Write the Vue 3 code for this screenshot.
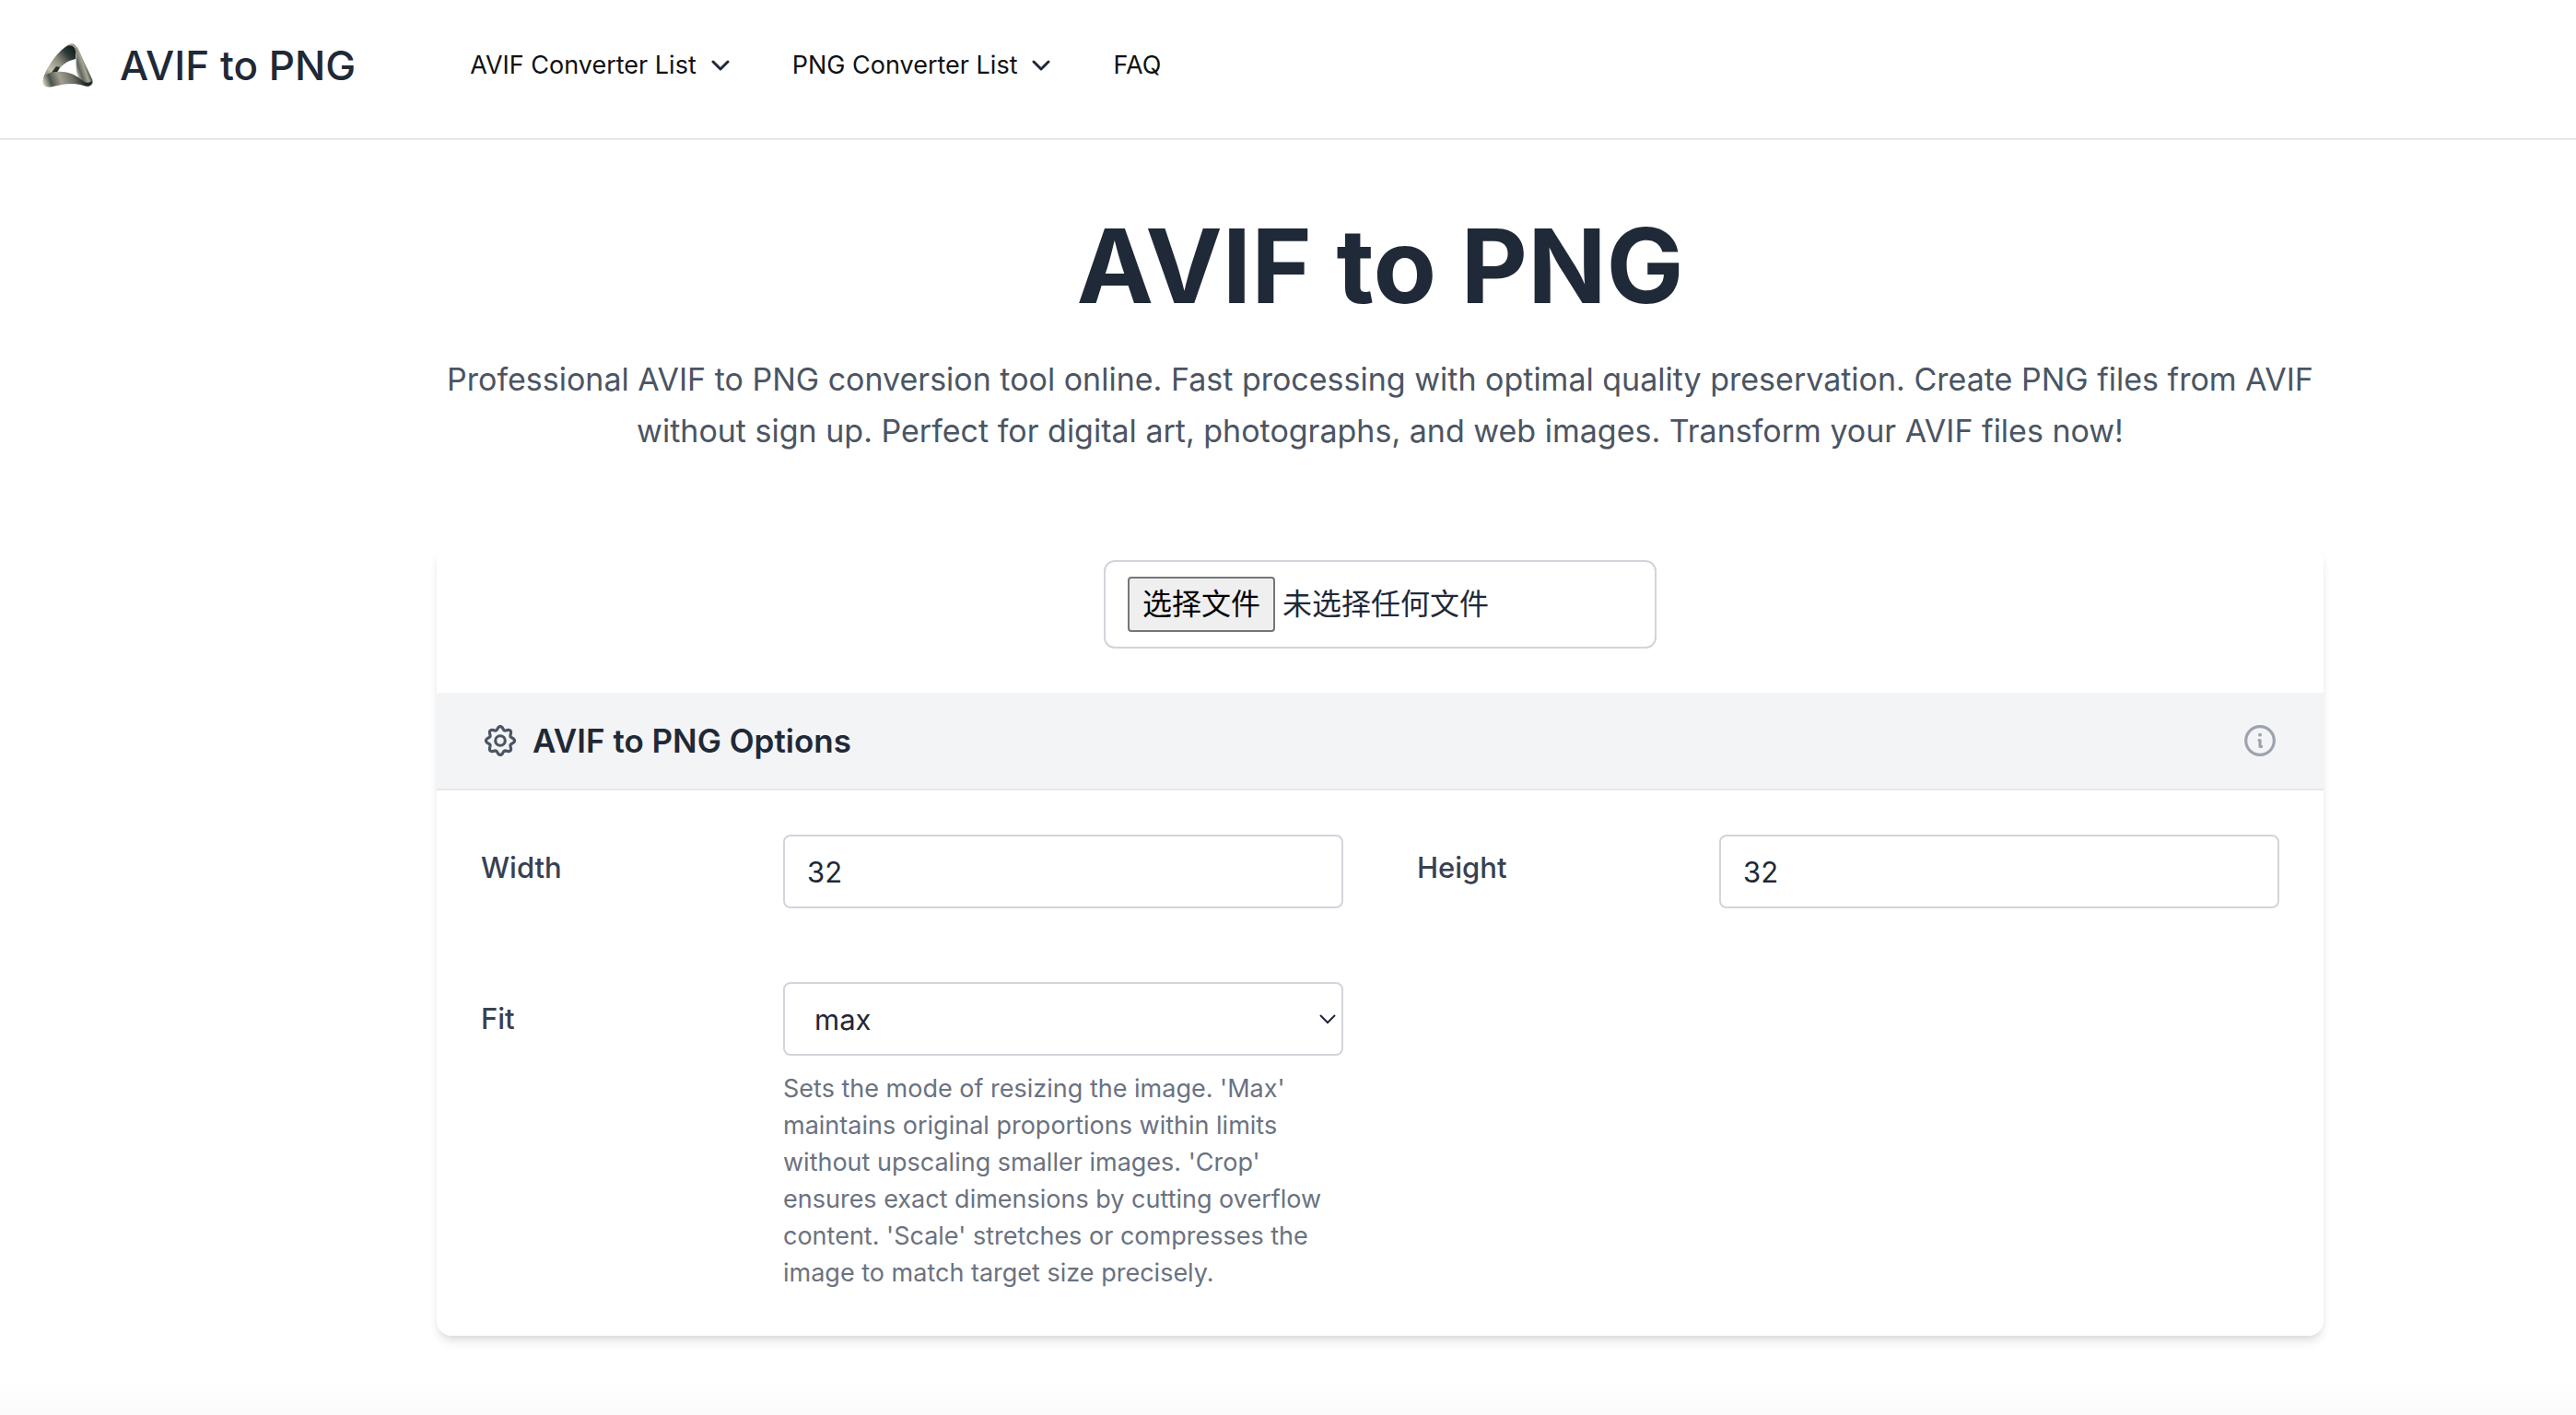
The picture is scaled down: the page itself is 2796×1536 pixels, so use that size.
<template>
  <div class="page">
    <header class="site-header">
      <a href="#" class="brand">
        <svg class="brand-logo" viewBox="0 0 58 50" aria-hidden="true">
          <defs>
            <linearGradient id="ribbon-left" gradientUnits="userSpaceOnUse" x1="3" y1="38" x2="38" y2="10">
              <stop offset="0" stop-color="#6b6e64" />
              <stop offset="0.25" stop-color="#c4c0ac" />
              <stop offset="0.55" stop-color="#8b8a7d" />
              <stop offset="0.8" stop-color="#2f3b39" />
              <stop offset="1" stop-color="#14201f" />
            </linearGradient>
            <linearGradient id="ribbon-right" gradientUnits="userSpaceOnUse" x1="36" y1="28" x2="51" y2="23">
              <stop offset="0" stop-color="#d8d5c3" />
              <stop offset="0.35" stop-color="#5d645f" />
              <stop offset="0.7" stop-color="#aaa796" />
              <stop offset="1" stop-color="#2f3b39" />
            </linearGradient>
            <linearGradient id="ribbon-bottom" gradientUnits="userSpaceOnUse" x1="3" y1="46" x2="44" y2="32">
              <stop offset="0" stop-color="#e0dcc8" />
              <stop offset="0.2" stop-color="#4b534e" />
              <stop offset="0.45" stop-color="#a19f90" />
              <stop offset="0.75" stop-color="#6d6e65" />
              <stop offset="1" stop-color="#1d2927" />
            </linearGradient>
          </defs>
          <path d="M4 36C8 25 19 9 30 3C34 0 38 4 38 9V18C29 20 21 25 18 34C10 36 6 40 4 46C2 44 3 39 4 36Z" fill="url(#ribbon-left)" />
          <path d="M17 26L21 27L17 34L11 34Z" fill="#24312e" />
          <path d="M30 3C34 0 38 2 41 7C45 17 51 29 56 40C58 45 55 48 51 47C45 43 40 39 39 31C38 22 40 10 36 5Z" fill="url(#ribbon-right)" />
          <path d="M3 40C6 33 12 32 18 32C30 31 39 36 45 41C49 45 53 44 56 42C56 47 52 49 47 47C34 43 22 46 13 48C5 50 1 46 3 40Z" fill="url(#ribbon-bottom)" />
          <path d="M30 3C33 1 36 3 38 6" fill="none" stroke="#d5d1bc" stroke-width="1" />
        </svg>
        <span class="brand-name">AVIF to PNG</span>
      </a>
      <nav class="site-nav">
        <button v-for="menu in menus" :key="menu" type="button" class="nav-item">
          {{ menu }}
          <svg class="nav-chevron" viewBox="0 0 20 20" aria-hidden="true">
            <path d="M2 6L10 14L18 6" />
          </svg>
        </button>
        <a href="#faq" class="nav-item">FAQ</a>
      </nav>
    </header>

    <main class="content">
      <section class="hero">
        <h1>AVIF to PNG</h1>
        <p>
          Professional AVIF to PNG conversion tool online. Fast processing with optimal quality preservation. Create PNG files from AVIF without sign up. Perfect for digital art, photographs, and web images. Transform your AVIF files now!
        </p>
      </section>

      <form class="card" @submit.prevent>
        <div class="upload">
          <div class="file-box">
            <button type="button" class="file-button" @click="fileInput.click()">选择文件</button>
            <span class="file-name">{{ fileName }}</span>
            <input ref="fileInput" type="file" accept=".avif" aria-label="选择文件" hidden @change="onFileChange" />
          </div>
        </div>

        <div class="options-header">
          <svg class="icon gear" viewBox="0 0 36 36" aria-hidden="true">
            <path :d="gearPath" />
            <circle cx="18" cy="18" r="5" />
          </svg>
          <h2>AVIF to PNG Options</h2>
          <button type="button" class="info-button" aria-label="Info">
            <svg class="icon info" viewBox="0 0 36 36" aria-hidden="true">
              <circle cx="18" cy="18" r="14.5" />
              <path d="M17 17.5H18V24H19.5" />
              <circle class="dot" cx="18" cy="12" r="1.8" />
            </svg>
          </button>
        </div>

        <div class="options">
          <div class="field">
            <label for="width">Width</label>
            <input id="width" v-model="options.width" type="text" inputmode="numeric" />
          </div>
          <div class="field">
            <label for="height">Height</label>
            <input id="height" v-model="options.height" type="text" inputmode="numeric" />
          </div>
          <div class="field select-field">
            <label for="fit">Fit</label>
            <div>
              <div class="select-wrap">
                <select id="fit" v-model="options.fit">
                  <option v-for="mode in fitModes" :key="mode" :value="mode">{{ mode }}</option>
                </select>
                <svg class="select-arrow" viewBox="0 0 18 12" aria-hidden="true">
                  <path d="M1 2L9 10L17 2" />
                </svg>
              </div>
              <p class="help">
                Sets the mode of resizing the image. 'Max' maintains original proportions within limits without upscaling smaller images. 'Crop' ensures exact dimensions by cutting overflow content. 'Scale' stretches or compresses the image to match target size precisely.
              </p>
            </div>
          </div>
        </div>
      </form>
    </main>
  </div>
</template>

<script setup>
import { reactive, ref } from 'vue'

const menus = ['AVIF Converter List', 'PNG Converter List']
const fitModes = ['max', 'crop', 'scale']

const options = reactive({
  width: '32',
  height: '32',
  fit: 'max'
})

const fileInput = ref(null)
const fileName = ref('未选择任何文件')

const onFileChange = (event) => {
  const file = event.target.files[0]
  fileName.value = file ? file.name : '未选择任何文件'
}

// Closed wavy outline with eight rounded teeth
const buildGear = () => {
  const points = []
  for (let i = 0; i < 96; i++) {
    const angle = (i / 96) * Math.PI * 2
    const radius = 13 + 1.7 * Math.cos(angle * 8)
    points.push(`${(18 + radius * Math.cos(angle)).toFixed(2)} ${(18 + radius * Math.sin(angle)).toFixed(2)}`)
  }
  return `M${points.join('L')}Z`
}

const gearPath = buildGear()
</script>

<style>
body {
  margin: 0;
  background: #ffffff;
}
</style>

<style scoped>
.page {
  min-height: 100vh;
  box-sizing: border-box;
  font-family: Inter, "Noto Sans CJK SC", sans-serif;
  color: #1f2937;
  background: linear-gradient(to top, #fbfbfb, #ffffff 40px);
}

.site-header {
  display: flex;
  align-items: center;
  height: 150px;
  padding: 0 44px;
  box-sizing: content-box;
  border-bottom: 2px solid #e5e7eb;
}

.brand {
  display: flex;
  align-items: center;
  gap: 28px;
  margin-right: 124px;
  padding-bottom: 8px;
  color: #1f2937;
  text-decoration: none;
}

.brand-logo {
  width: 58px;
  height: 50px;
}

.brand-name {
  font-size: 44px;
  line-height: 56px;
  font-weight: 500;
}

.site-nav {
  display: flex;
  align-items: center;
  gap: 68px;
  padding-bottom: 8px;
}

.nav-item {
  display: flex;
  align-items: center;
  gap: 16px;
  padding: 0;
  border: none;
  background: none;
  font-family: inherit;
  font-size: 27px;
  line-height: 40px;
  color: #111111;
  text-decoration: none;
  cursor: pointer;
}

.nav-chevron {
  width: 20px;
  height: 20px;
  fill: none;
  stroke: #1f2937;
  stroke-width: 3;
  stroke-linecap: round;
  stroke-linejoin: round;
}

.content {
  max-width: 2048px;
  margin: 0 auto;
  padding-left: 200px;
}

.hero {
  padding-top: 72px;
  text-align: center;
}

.hero h1 {
  margin: 0;
  font-size: 112px;
  line-height: 128px;
  font-weight: 700;
}

.hero p {
  margin: 32px 0 0;
  font-size: 34px;
  line-height: 56px;
  color: #4b5563;
}

.card {
  margin-top: 96px;
  border-radius: 16px;
  background: #ffffff;
  box-shadow: 0 8px 12px -2px rgba(0, 0, 0, 0.1), 0 4px 8px -4px rgba(0, 0, 0, 0.1);
}

.upload {
  display: flex;
  justify-content: center;
  padding: 16px 48px 48px;
}

.file-box {
  display: flex;
  align-items: center;
  gap: 8px;
  width: 600px;
  height: 96px;
  padding: 0 24px;
  box-sizing: border-box;
  border: 2px solid #d1d5db;
  border-radius: 12px;
}

.file-button {
  height: 60px;
  padding: 0 14px;
  border: 2px solid #767676;
  border-radius: 4px;
  background: #efefef;
  font-family: inherit;
  font-size: 32px;
  line-height: 48px;
  color: #000000;
}

.file-name {
  font-size: 32px;
  line-height: 48px;
}

.options-header {
  display: flex;
  align-items: center;
  gap: 16px;
  height: 104px;
  padding: 0 50px;
  border-bottom: 2px solid #e5e7eb;
  background: #f3f4f6;
}

.options-header h2 {
  flex: 1;
  margin: 0;
  font-size: 35px;
  line-height: 56px;
  font-weight: 600;
}

.icon {
  display: block;
  width: 38px;
  height: 38px;
  fill: none;
  stroke-width: 3;
  stroke-linecap: round;
  stroke-linejoin: round;
}

.gear {
  stroke: #4b5563;
}

.info {
  stroke: #9ca3af;
}

.info .dot {
  fill: #9ca3af;
  stroke: none;
}

.info-button {
  padding: 0;
  border: none;
  background: none;
  cursor: pointer;
}

.options {
  display: grid;
  grid-template-columns: 1fr 1fr;
  gap: 80px;
  padding: 48px;
}

.field {
  display: grid;
  grid-template-columns: 328px 1fr;
  align-items: start;
}

.field label {
  padding-top: 12px;
  font-size: 31px;
  line-height: 48px;
  font-weight: 500;
  color: #374151;
}

.select-field label {
  padding-top: 16px;
}

.field input,
.field select {
  display: block;
  width: 100%;
  height: 80px;
  padding: 0 24px;
  box-sizing: border-box;
  border: 2px solid #d1d5db;
  border-radius: 8px;
  background: #ffffff;
  font-family: inherit;
  font-size: 31px;
  color: #1f2937;
}

.field select {
  padding: 0 32px;
  appearance: none;
}

.select-wrap {
  position: relative;
}

.select-arrow {
  position: absolute;
  top: 34px;
  right: 8px;
  width: 18px;
  height: 12px;
  fill: none;
  stroke: #1f2937;
  stroke-width: 2;
  pointer-events: none;
}

.help {
  margin: 16px 0 0;
  font-size: 27px;
  line-height: 40px;
  color: #6b7280;
}
</style>
